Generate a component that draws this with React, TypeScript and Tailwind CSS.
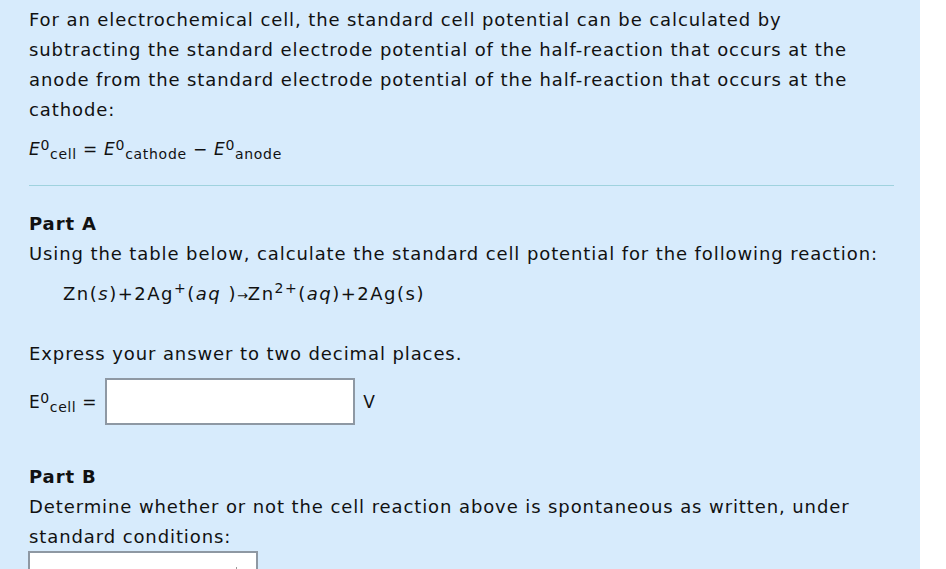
import React from "react";

export default function App() {
  return (
    <div
      className="w-[946px] h-[569px] overflow-hidden bg-white text-[#111]"
      style={{ fontFamily: '"DejaVu Sans", Verdana, sans-serif' }}
    >
      <div className="w-[920px] bg-[#d7ebfc] pl-[29px] pr-[26px] pt-[5px] pb-[40px] tracking-[0.9px]">
        <p className="text-[18px] leading-[30px]">
          For an electrochemical cell, the standard cell potential can be calculated by
          <br />
          subtracting the standard electrode potential of the half-reaction that occurs at the
          <br />
          anode from the standard electrode potential of the half-reaction that occurs at the
          <br />
          cathode:
        </p>
        <p className="mt-[12px] text-[17px] leading-[24px] tracking-[0.7px]">
          <i>E</i>
          <span className="text-[14px] leading-none align-[5px]">0</span>
          <span className="text-[14px] leading-none align-[-4px]">cell</span> = <i>E</i>
          <span className="text-[14px] leading-none align-[5px]">0</span>
          <span className="text-[14px] leading-none align-[-4px]">cathode</span> − <i>E</i>
          <span className="text-[14px] leading-none align-[5px]">0</span>
          <span className="text-[14px] leading-none align-[-4px]">anode</span>
        </p>
        <div className="mt-[24px] h-px bg-[#9fd2de]" />

        <div className="mt-[23px] text-[18px] leading-[30px]">
          <p className="font-bold">Part A</p>
          <p>Using the table below, calculate the standard cell potential for the following reaction:</p>
          <p className="mt-[10px] pl-[34px] tracking-[1.5px]">
            Zn(<i>s</i>)+2Ag<sup className="text-[14px]">+</sup>(<i>aq</i> )
            <span className="text-[13px] tracking-normal">→</span>Zn<sup className="text-[14px]">2+</sup>(<i>aq</i>)+2Ag(s)
          </p>
          <p className="mt-[28px]">Express your answer to two decimal places.</p>
          <div className="mt-[9px] flex items-center">
            <span className="text-[17px] tracking-[0.6px]">
              E<span className="text-[14px] leading-none align-[5px]">0</span>
              <span className="text-[14px] leading-none align-[-4px]">cell</span> =
            </span>
            <div className="ml-[8px] w-[250px] h-[47px] bg-white border-2 border-[#8e98a3]" />
            <span className="ml-[8px] text-[17px]">V</span>
          </div>

          <p className="mt-[37px] font-bold">Part B</p>
          <p>
            Determine whether or not the cell reaction above is spontaneous as written, under
            <br />
            standard conditions:
          </p>
          <div className="-mt-px -ml-px relative w-[230px] h-[40px] bg-white border-2 border-[#8e98a3]">
            <span className="absolute right-[19px] top-[14px] w-px h-[3px] bg-[#999]" />
          </div>
        </div>
      </div>
    </div>
  );
}
